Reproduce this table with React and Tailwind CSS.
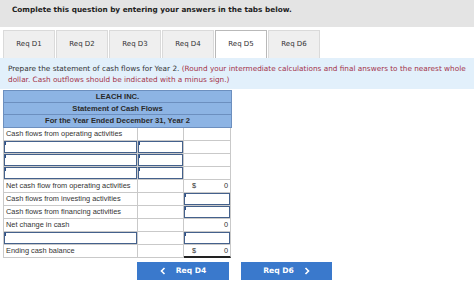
import React from "react";

const verdana = { fontFamily: '"DejaVu Sans", Verdana, sans-serif' };
const arial = { fontFamily: '"Liberation Sans", Arial, sans-serif' };

const tabs = ["Req D1", "Req D2", "Req D3", "Req D4", "Req D5", "Req D6"];
const widths = ["w-[135px] border-l", "w-[46px]", "w-[47px]"];

// one cell of the statement grid: plain text, an input box, or an amount
const Cell = ({ col, kind, text, dollar, total }) => {
  const base = `${widths[col]} h-[13px] shrink-0 border-r border-b border-[#c9c9c9]`;
  if (kind === "input") {
    return (
      <div className={base}>
        <div className="relative h-full border border-[#44618c] bg-white">
          <span className="absolute left-0 top-0 h-[3px] w-[1px] bg-[#2d4f86]" />
        </div>
      </div>
    );
  }
  if (kind === "amount") {
    return (
      <div
        className={`${base} flex justify-between pl-[8px] pr-[2px] text-[7.4px] leading-[12px] text-[#333] ${
          total ? "border-b-2 border-b-[#222]" : ""
        }`}
      >
        <span>{dollar ? "$" : ""}</span>
        <span>{text}</span>
      </div>
    );
  }
  return <div className={`${base} px-[2px] text-[7.4px] leading-[12px] text-[#333]`}>{text}</div>;
};

const rows = [
  [{ text: "Cash flows from operating activities" }, {}, {}],
  [{ kind: "input" }, { kind: "input" }, {}],
  [{ kind: "input" }, { kind: "input" }, {}],
  [{ kind: "input" }, { kind: "input" }, {}],
  [{ text: "Net cash flow from operating activities" }, {}, { kind: "amount", dollar: true, text: "0" }],
  [{ text: "Cash flows from investing activities" }, {}, { kind: "input" }],
  [{ text: "Cash flows from financing activities" }, {}, { kind: "input" }],
  [{ text: "Net change in cash" }, {}, { kind: "amount", text: "0" }],
  [{ kind: "input" }, {}, { kind: "input" }],
  [{ text: "Ending cash balance" }, {}, { kind: "amount", dollar: true, text: "0", total: true }],
];

const headings = [
  { text: "LEACH INC.", cls: "h-[13px] border" },
  { text: "Statement of Cash Flows", cls: "h-[12px] border-x border-b" },
  { text: "For the Year Ended December 31, Year 2", cls: "h-[13px] border-x border-b" },
];

const Chevron = ({ left }) => (
  <svg width="6" height="8" viewBox="0 0 6 8" fill="none" stroke="white" strokeWidth="1.6">
    <path d={left ? "M4.5 1 L1.5 4 L4.5 7" : "M1.5 1 L4.5 4 L1.5 7"} />
  </svg>
);

export default function App() {
  return (
    <div className="h-[284px] w-[474px] overflow-hidden bg-white">
      <div className="h-[27px] bg-[#e4e4e4] pl-[12px] pt-[5px] text-[7.3px] font-bold text-[#222]" style={verdana}>
        Complete this question by entering your answers in the tabs below.
      </div>

      <div className="mt-[3px] flex gap-[1px] pl-[3px]" style={verdana}>
        {tabs.map((t) => (
          <div
            key={t}
            className={`flex h-[28px] w-[52px] items-center justify-center border border-b-0 text-[7px] text-[#333] ${
              t === "Req D5" ? "border-[#b9b9b9] bg-white" : "border-[#dadada] bg-[#efefef]"
            }`}
          >
            {t}
          </div>
        ))}
      </div>

      <div className="h-[31px] bg-[#e2f0fb] pl-[8px] pr-[6px] pt-[5px] text-[7.3px] leading-[11px] text-[#333]" style={verdana}>
        <div className="whitespace-nowrap">
          Prepare the statement of cash flows for Year 2.{" "}
          <span className="text-[#a3334a]">
            (Round your intermediate calculations and final answers to the nearest whole
          </span>
        </div>
        <div className="text-[#a3334a]">dollar. Cash outflows should be indicated with a minus sign.)</div>
      </div>

      <div className="ml-[3px] mt-[1px] w-[229px]" style={arial}>
        {headings.map((h) => (
          <div
            key={h.text}
            className={`${h.cls} border-[#6c8fbf] bg-[#8db4e4] text-center text-[7.6px] font-bold leading-[11px] text-[#2a2a2a]`}
          >
            {h.text}
          </div>
        ))}
        {rows.map((r, i) => (
          <div key={i} className="flex">
            {r.map((c, j) => (
              <Cell key={j} col={j} {...c} />
            ))}
          </div>
        ))}
      </div>

      <div className="mt-[4px] flex gap-[12px] pl-[137px]" style={verdana}>
        <button className="flex h-[18px] w-[92px] items-center justify-center gap-[10px] bg-[#3a79cc] text-[7.6px] font-bold text-white">
          <Chevron left />
          <span>Req D4</span>
        </button>
        <button className="flex h-[18px] w-[91px] items-center justify-center gap-[10px] bg-[#3a79cc] text-[7.6px] font-bold text-white">
          <span>Req D6</span>
          <Chevron />
        </button>
      </div>
    </div>
  );
}
